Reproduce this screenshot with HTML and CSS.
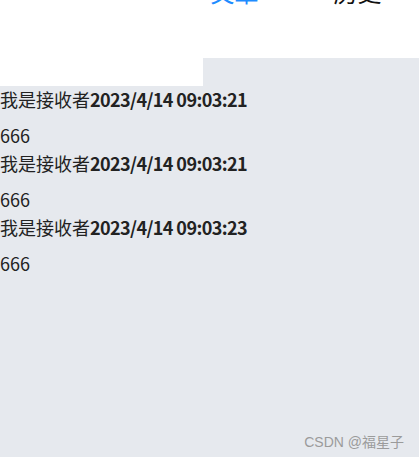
FILE: index.html
```html
<!DOCTYPE html>
<html lang="zh">
<head>
<meta charset="utf-8">
<title>消息</title>
<link rel="stylesheet" href="styles.css">
</head>
<body>
<div class="page">
  <nav class="tabs">
    <div class="tab active">文章</div>
    <div class="tab">历史</div>
  </nav>
  <main class="panel">
    <div class="spacer"></div>
    <div class="msg">
      <div class="head"><span class="name">我是接收者</span><span class="time">2023/4/14 09:03:21</span></div>
      <p class="body">666</p>
    </div>
    <div class="msg">
      <div class="head"><span class="name">我是接收者</span><span class="time">2023/4/14 09:03:21</span></div>
      <p class="body">666</p>
    </div>
    <div class="msg">
      <div class="head"><span class="name">我是接收者</span><span class="time">2023/4/14 09:03:23</span></div>
      <p class="body">666</p>
    </div>
  </main>
  <div class="watermark">CSDN @福星子</div>
</div>
</body>
</html>
```
FILE: styles.css
```css
html, body {
  margin: 0;
  padding: 0;
  background: #ffffff;
}
body {
  font-family: "Noto Sans CJK SC", "Noto Sans", sans-serif;
  color: #222222;
  overflow: hidden;
}
.page {
  position: relative;
  width: 419px;
  height: 457px;
  display: flex;
  flex-direction: column;
}
.tabs {
  display: flex;
  margin-top: -20px;
  padding-left: 173px;
  height: 78px;
}
.tab {
  width: 123px;
  text-align: center;
  font-size: 24px;
  line-height: 24px;
  height: 24px;
  color: #111111;
}
.tab.active {
  color: #1f8cff;
}
.panel {
  flex: 1;
  background: #e6e9ee;
}
.spacer {
  width: 203px;
  height: 28px;
  background: #ffffff;
  margin-bottom: 1px;
}
.msg {
  font-size: 18px;
  line-height: 24px;
}
.head {
  height: 24px;
  white-space: nowrap;
}
.time {
  font-weight: bold;
  letter-spacing: -0.6px;
}
.body {
  margin: 12px 0 4px;
  height: 24px;
}
.watermark {
  position: absolute;
  right: 15px;
  bottom: 6px;
  font-family: "Liberation Sans", "Noto Sans CJK SC", sans-serif;
  font-size: 14px;
  line-height: 18px;
  color: #9b9b9b;
}
```
